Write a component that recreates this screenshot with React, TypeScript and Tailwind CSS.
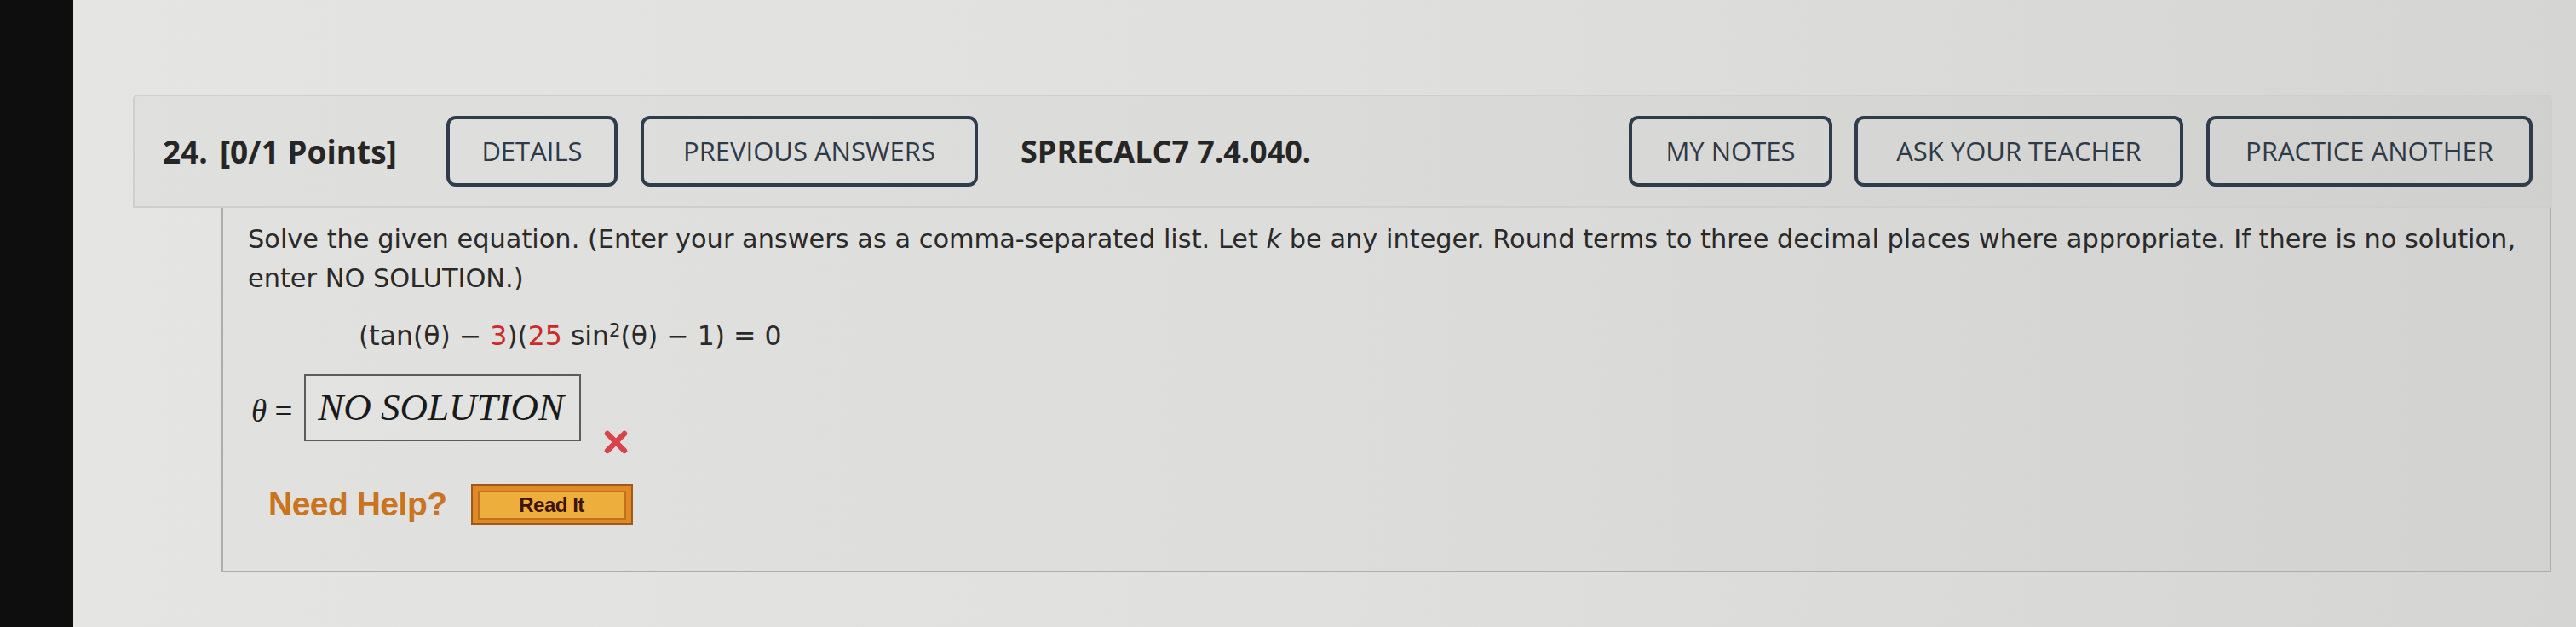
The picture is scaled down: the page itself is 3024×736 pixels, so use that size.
import React from "react";

const OPEN = { fontFamily: '"Open Sans", "Liberation Sans", sans-serif' };
const VERD = { fontFamily: '"DejaVu Sans", Verdana, sans-serif' };
const TIMES = { fontFamily: '"Liberation Serif", "Times New Roman", serif' };
const ARIAL = { fontFamily: '"Liberation Sans", Arial, sans-serif' };

function Btn({ label, w, className = "" }: { label: string; w: string; className?: string }) {
  return (
    <div
      style={OPEN}
      className={`flex h-[83px] shrink-0 items-center justify-center whitespace-nowrap rounded-[11px] border-[4px] border-[#2e3c4b] text-[31px] text-[#2e3a47] ${w} ${className}`}
    >
      {label}
    </div>
  );
}

function RedX() {
  return (
    <svg width="30" height="28" viewBox="0 0 30 28">
      <path d="M5 4 L25 24 M25 4 L5 24" stroke="#d9434c" strokeWidth="6.5" strokeLinecap="round" />
    </svg>
  );
}

export default function App() {
  return (
    <div className="flex h-[736px] w-[3024px] overflow-hidden bg-linear-to-r from-[#e5e5e3] via-[#e0e0de] to-[#d5d5d3]">
      <div className="w-[86px] shrink-0 bg-[#0e0e0e]" />
      <div className="flex-1 pl-[70px] pr-[28px] pt-[111px]">
        <div className="flex h-[133px] items-center rounded-t-[6px] border-2 border-[#cfcfcd] bg-black/[0.02] pl-[33px] pr-[21px]">
          <div style={OPEN} className="w-[279px] shrink-0 whitespace-nowrap text-[37px] font-bold text-[#262626]">
            24.<span className="ml-[14px]">[0/1 Points]</span>
          </div>
          <Btn label="DETAILS" w="w-[201px]" className="ml-[54px]" />
          <Btn label="PREVIOUS ANSWERS" w="w-[396px]" className="ml-[27px]" />
          <div style={OPEN} className="ml-[50px] whitespace-nowrap text-[36px] font-bold text-[#262626]">
            SPRECALC7 7.4.040.
          </div>
          <Btn label="MY NOTES" w="w-[239px]" className="ml-auto" />
          <Btn label="ASK YOUR TEACHER" w="w-[386px]" className="ml-[26px]" />
          <Btn label="PRACTICE ANOTHER" w="w-[383px]" className="ml-[27px]" />
        </div>
        <div className="ml-[104px] mr-[1px] h-[428px] border-x-2 border-b-2 border-[#adadab] bg-black/[0.01] pl-[29px] pt-[14px]">
          <p style={VERD} className="whitespace-nowrap text-[30.4px] leading-[46px] text-[#2a2a2a]">
            Solve the given equation. (Enter your answers as a comma-separated list. Let <i>k</i> be any integer. Round
            terms to three decimal places where appropriate. If there is no solution,
            <br />
            enter NO SOLUTION.)
          </p>
          <div style={VERD} className="mt-[25px] pl-[130px] text-[31.5px] leading-[38px] text-[#2a2a2a]">
            (tan(θ) − <span className="text-[#cc2a2a]">3</span>)(<span className="text-[#cc2a2a]">25</span> sin
            <sup className="text-[21px]">2</sup>(θ) − 1) = 0
          </div>
          <div className="mt-[26px] flex items-start">
            <div style={TIMES} className="mt-[16px] ml-[4px] whitespace-nowrap text-[37px] text-[#1e1e1e]">
              <i>θ</i> =
            </div>
            <div
              style={TIMES}
              className="ml-[14px] flex h-[79px] w-[325px] items-center border-2 border-[#5c5c5a] bg-white/[0.08] pl-[14px] text-[45px] italic text-[#1a1a1a]"
            >
              NO SOLUTION
            </div>
            <div className="ml-[26px] mt-[66px]">
              <RedX />
            </div>
          </div>
          <div className="mt-[30px] flex items-center pl-[24px]">
            <span style={ARIAL} className="text-[39px] font-bold tracking-[-0.5px] text-[#c9741e]">
              Need Help?
            </span>
            <div className="ml-[28px] h-[48px] w-[190px] border-2 border-[#a0591a] bg-[#e08a26] px-[6px] pt-[6px] pb-[4px]">
              <div
                style={ARIAL}
                className="flex h-full items-center justify-center border-2 border-[#c0701e] bg-[#eeae3c] text-[24px] font-bold tracking-[-0.5px] text-[#3e1509]"
              >
                Read It
              </div>
            </div>
          </div>
        </div>
      </div>
    </div>
  );
}
